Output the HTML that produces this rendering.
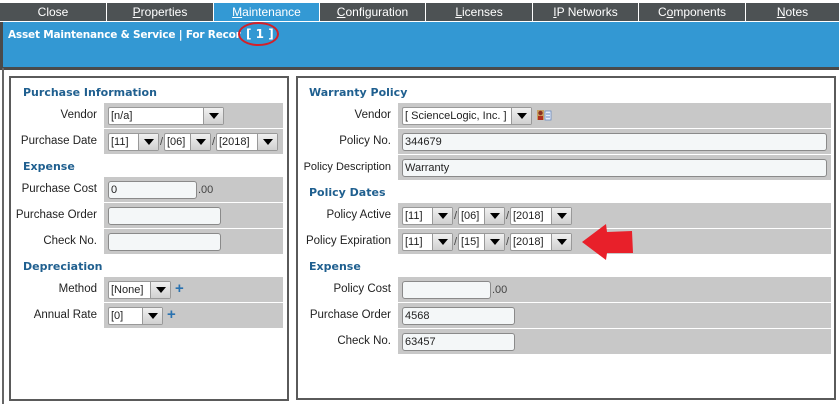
<!DOCTYPE html>
<html><head><meta charset="utf-8">
<style>
*{box-sizing:border-box;margin:0;padding:0}
body{width:839px;height:404px;background:#fff;position:relative;overflow:hidden;font-family:"Liberation Sans",Arial,sans-serif;font-size:12px;color:#222}
.a{position:absolute;white-space:nowrap}
.tab{position:absolute;top:3px;height:18px;background:#4d5254;color:#fff;text-align:center;font-size:12px;line-height:18px}
.tab u{text-decoration:underline}
.h{position:absolute;font-weight:bold;color:#1f5f8f;font-family:"DejaVu Sans",sans-serif;font-size:11px;white-space:nowrap}
.row{position:absolute;background:#c8c8c8;height:25px}
.lbl{position:absolute;text-align:right;font-size:11.5px;line-height:25px;height:25px;white-space:nowrap}
.in{position:absolute;height:18px;background:#f4f7f8;border:1px solid #8a8a8a;border-radius:3px;font-size:11px;line-height:16px;padding-left:2px;white-space:nowrap}
.sel{position:absolute;height:18px;background:#fff;border:1px solid #999;border-radius:2px;font-size:11px;line-height:16px;padding-left:2px;white-space:nowrap}
.btn{position:absolute;top:0;right:0;width:20px;height:16px;background:linear-gradient(#f0f0f0,#d0d0d0);border-left:1px solid #999}
.btn:after{content:"";position:absolute;left:5px;top:5px;border-left:5px solid transparent;border-right:5px solid transparent;border-top:6px solid #000}
.sl{position:absolute;font-size:11px;color:#444;line-height:18px}
.plus{position:absolute;color:#2a72b0;font-weight:bold;font-size:15px;line-height:18px}
</style></head><body>
<div class="tab" style="left:0;width:106px">Close</div>
<div class="tab" style="left:107px;width:106px"><u>P</u>roperties</div>
<div class="tab" style="left:214px;width:105px;background:#3399d4"><u>M</u>aintenance</div>
<div class="tab" style="left:320px;width:105px"><u>C</u>onfiguration</div>
<div class="tab" style="left:426px;width:106px"><u>L</u>icenses</div>
<div class="tab" style="left:533px;width:105px"><u>I</u>P Networks</div>
<div class="tab" style="left:639px;width:106px">C<u>o</u>mponents</div>
<div class="tab" style="left:746px;width:93px"><u>N</u>otes</div>

<div class="a" style="left:0;top:22px;width:839px;height:46px;background:#3398d3;border-left:3px solid #4a4a4a"></div>
<div class="a" style="left:8px;top:28px;color:#fff;font-weight:bold;font-family:'DejaVu Sans',sans-serif;font-size:10.5px;line-height:14px;letter-spacing:-0.2px">Asset Maintenance &amp; Service | For Recor</div>
<div class="a" style="left:246px;top:26px;color:#fff;font-weight:bold;font-family:'DejaVu Sans',sans-serif;font-size:12px;line-height:16px">[ 1 ]</div>
<div class="a" style="left:238px;top:22px;width:41px;height:24px;border:2px solid #d42028;border-radius:50%"></div>
<div class="a" style="left:0;top:67px;width:839px;height:3px;background:#4a4a4a"></div>
<div class="a" style="left:2px;top:68px;width:2px;height:336px;background:#666"></div>

<div class="a" style="left:9px;top:76px;width:280px;height:325px;border:2px solid #5a5a5a"></div>
<div class="a" style="left:296px;top:76px;width:540px;height:324px;border:2px solid #5a5a5a"></div>

<!-- left panel -->
<div class="h" style="left:23px;top:86px">Purchase Information</div>
<div class="row" style="left:104px;top:103px;width:179px"></div>
<div class="lbl" style="left:10px;top:103px;width:87px">Vendor</div>
<div class="sel" style="left:108px;top:107px;width:116px">[n/a]<div class="btn"></div></div>
<div class="row" style="left:104px;top:129px;width:179px"></div>
<div class="lbl" style="left:10px;top:129px;width:87px">Purchase Date</div>
<div class="sel" style="left:108px;top:133px;width:51px">[11]<div class="btn"></div></div>
<div class="sl" style="left:160px;top:133px">/</div>
<div class="sel" style="left:164px;top:133px;width:47px">[06]<div class="btn"></div></div>
<div class="sl" style="left:212px;top:133px">/</div>
<div class="sel" style="left:216px;top:133px;width:62px">[2018]<div class="btn"></div></div>

<div class="h" style="left:23px;top:160px">Expense</div>
<div class="row" style="left:104px;top:177px;width:179px"></div>
<div class="lbl" style="left:10px;top:177px;width:87px">Purchase Cost</div>
<div class="in" style="left:108px;top:181px;width:89px">0</div>
<div class="sl" style="left:198px;top:181px">.00</div>
<div class="row" style="left:104px;top:203px;width:179px"></div>
<div class="lbl" style="left:10px;top:203px;width:87px">Purchase Order</div>
<div class="in" style="left:108px;top:207px;width:113px"></div>
<div class="row" style="left:104px;top:229px;width:179px"></div>
<div class="lbl" style="left:10px;top:229px;width:87px">Check No.</div>
<div class="in" style="left:108px;top:233px;width:113px"></div>

<div class="h" style="left:23px;top:260px">Depreciation</div>
<div class="row" style="left:104px;top:277px;width:179px"></div>
<div class="lbl" style="left:10px;top:277px;width:87px">Method</div>
<div class="sel" style="left:108px;top:281px;width:63px">[None]<div class="btn"></div></div>
<div class="plus" style="left:175px;top:280px">+</div>
<div class="row" style="left:104px;top:303px;width:179px"></div>
<div class="lbl" style="left:10px;top:303px;width:87px">Annual Rate</div>
<div class="sel" style="left:108px;top:307px;width:55px">[0]<div class="btn"></div></div>
<div class="plus" style="left:167px;top:306px">+</div>

<!-- right panel -->
<div class="h" style="left:309px;top:86px">Warranty Policy</div>
<div class="row" style="left:398px;top:103px;width:433px"></div>
<div class="lbl" style="left:298px;top:103px;width:93px">Vendor</div>
<div class="sel" style="left:402px;top:107px;width:130px">[ ScienceLogic, Inc. ]<div class="btn"></div></div>
<svg class="a" style="left:536px;top:109px" width="16" height="12" viewBox="0 0 16 12"><rect x="1" y="1" width="7" height="10" fill="#c8a060"/><circle cx="4.5" cy="4" r="2.2" fill="#8a3020"/><rect x="2" y="7" width="5" height="4" fill="#b03020"/><rect x="9" y="2" width="6" height="9" fill="#e8eef8" stroke="#6a8ac0" stroke-width=".8"/><line x1="10" y1="5" x2="14" y2="5" stroke="#6a8ac0"/><line x1="10" y1="8" x2="14" y2="8" stroke="#6a8ac0"/></svg>
<div class="row" style="left:398px;top:129px;width:433px"></div>
<div class="lbl" style="left:298px;top:129px;width:93px">Policy No.</div>
<div class="in" style="left:402px;top:133px;width:425px">344679</div>
<div class="row" style="left:398px;top:155px;width:433px"></div>
<div class="lbl" style="left:298px;top:155px;width:93px;font-size:11px">Policy Description</div>
<div class="in" style="left:402px;top:159px;width:425px">Warranty</div>

<div class="h" style="left:309px;top:186px">Policy Dates</div>
<div class="row" style="left:398px;top:203px;width:433px"></div>
<div class="lbl" style="left:298px;top:203px;width:93px">Policy Active</div>
<div class="sel" style="left:402px;top:207px;width:51px">[11]<div class="btn"></div></div>
<div class="sl" style="left:454px;top:207px">/</div>
<div class="sel" style="left:458px;top:207px;width:47px">[06]<div class="btn"></div></div>
<div class="sl" style="left:506px;top:207px">/</div>
<div class="sel" style="left:510px;top:207px;width:62px">[2018]<div class="btn"></div></div>
<div class="row" style="left:398px;top:229px;width:433px"></div>
<div class="lbl" style="left:298px;top:229px;width:93px">Policy Expiration</div>
<div class="sel" style="left:402px;top:233px;width:51px">[11]<div class="btn"></div></div>
<div class="sl" style="left:454px;top:233px">/</div>
<div class="sel" style="left:458px;top:233px;width:47px">[15]<div class="btn"></div></div>
<div class="sl" style="left:506px;top:233px">/</div>
<div class="sel" style="left:510px;top:233px;width:62px">[2018]<div class="btn"></div></div>
<svg class="a" style="left:580px;top:222px" width="56" height="40" viewBox="0 0 56 40"><polygon points="2,20 26,2 27,10 52,9 53,31 27,31 26,38" fill="#e8202a"/></svg>

<div class="h" style="left:309px;top:260px">Expense</div>
<div class="row" style="left:398px;top:277px;width:433px"></div>
<div class="lbl" style="left:298px;top:277px;width:93px">Policy Cost</div>
<div class="in" style="left:402px;top:281px;width:89px"></div>
<div class="sl" style="left:492px;top:281px">.00</div>
<div class="row" style="left:398px;top:303px;width:433px"></div>
<div class="lbl" style="left:298px;top:303px;width:93px">Purchase Order</div>
<div class="in" style="left:402px;top:307px;width:113px">4568</div>
<div class="row" style="left:398px;top:329px;width:433px"></div>
<div class="lbl" style="left:298px;top:329px;width:93px">Check No.</div>
<div class="in" style="left:402px;top:333px;width:113px">63457</div>
</body></html>
